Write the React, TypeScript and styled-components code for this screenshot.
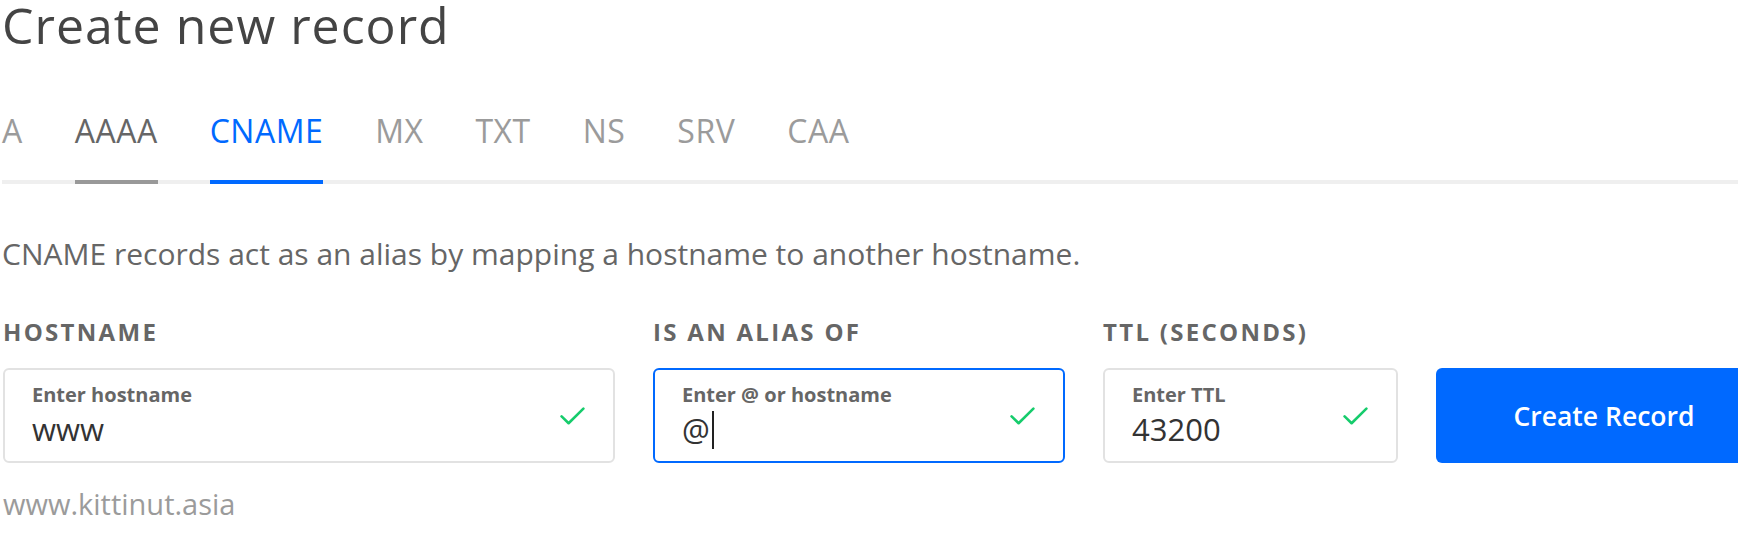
import React from "react";
import styled, { createGlobalStyle } from "styled-components";

const GlobalStyle = createGlobalStyle`
  html, body {
    margin: 0;
    padding: 0;
    background: #ffffff;
    overflow: hidden;
  }
  body {
    font-family: "Open Sans", "Liberation Sans", sans-serif;
    -webkit-font-smoothing: antialiased;
  }
  * { box-sizing: border-box; }
`;

const Page = styled.div`
  padding: 0 0 0 2px;
  width: 1738px;
`;

const Title = styled.h1`
  margin: 0;
  font-size: 50px;
  line-height: 50px;
  font-weight: 400;
  color: #444444;
  letter-spacing: 1px;
`;

const TabBar = styled.nav`
  display: flex;
  gap: 52px;
  margin-top: 61px;
  border-bottom: 4px solid #efefef;
`;

type TabState = "idle" | "hover" | "active";

const tabColor: Record<TabState, string> = {
  idle: "#9b9b9b",
  hover: "#666666",
  active: "#0069ff",
};
const tabLine: Record<TabState, string> = {
  idle: "transparent",
  hover: "#999999",
  active: "#0069ff",
};

const Tab = styled.div<{ $state: TabState }>`
  font-size: 32px;
  line-height: 40px;
  font-weight: 400;
  letter-spacing: 0.5px;
  padding-bottom: 29px;
  margin-bottom: -4px;
  border-bottom: 4px solid ${(p) => tabLine[p.$state]};
  color: ${(p) => tabColor[p.$state]};
`;

const Description = styled.p`
  margin: 50px 0 0 0;
  font-size: 30px;
  line-height: 40px;
  color: #666666;
`;

const FormGrid = styled.div`
  display: grid;
  grid-template-columns: 612px 412px 295px 336px;
  column-gap: 38px;
  row-gap: 21px;
  margin: 43px 0 0 1px;
  align-items: start;
`;

const FieldLabel = styled.div`
  font-size: 24px;
  line-height: 30px;
  font-weight: 700;
  letter-spacing: 2.3px;
  color: #666666;
  text-transform: uppercase;
  white-space: nowrap;
`;

const InputBox = styled.div<{ $focused?: boolean }>`
  height: 95px;
  border: 2px solid ${(p) => (p.$focused ? "#0069ff" : "#e2e2e2")};
  border-radius: 6px;
  display: flex;
  align-items: center;
  justify-content: space-between;
  padding: 0 28px 0 27px;
  background: #ffffff;
`;

const TextStack = styled.div`
  display: flex;
  flex-direction: column;
  gap: 2px;
`;

const InputLabel = styled.div`
  font-size: 20px;
  line-height: 24px;
  font-weight: 700;
  color: #666666;
  white-space: nowrap;
`;

const InputValue = styled.div`
  font-size: 31px;
  line-height: 40px;
  color: #333333;
  white-space: nowrap;
`;

const Caret = styled.span`
  display: inline-block;
  width: 2px;
  height: 38px;
  margin-left: 2px;
  background: #222222;
  vertical-align: -8px;
`;

const Hint = styled.div`
  grid-column: 1;
  margin-top: 3px;
  font-size: 29px;
  line-height: 34px;
  color: #9b9b9b;
`;

const SubmitButton = styled.button`
  height: 95px;
  border: none;
  border-radius: 6px;
  background: #0069ff;
  color: #ffffff;
  font-family: "Open Sans", "Liberation Sans", sans-serif;
  font-size: 26.5px;
  font-weight: 600;
  cursor: pointer;
  padding: 0;
`;

const Check = () => (
  <svg width="25" height="18" viewBox="0 0 25 18" fill="none" aria-hidden>
    <polyline
      points="1.6,9.4 8.6,16.2 23.4,1.6"
      stroke="#16cc6c"
      strokeWidth="2.6"
      strokeLinecap="round"
      strokeLinejoin="round"
    />
  </svg>
);

const tabs: { name: string; state: TabState }[] = [
  { name: "A", state: "idle" },
  { name: "AAAA", state: "hover" },
  { name: "CNAME", state: "active" },
  { name: "MX", state: "idle" },
  { name: "TXT", state: "idle" },
  { name: "NS", state: "idle" },
  { name: "SRV", state: "idle" },
  { name: "CAA", state: "idle" },
];

export default function App() {
  return (
    <>
      <GlobalStyle />
      <Page>
        <Title>Create new record</Title>
        <TabBar>
          {tabs.map((t) => (
            <Tab key={t.name} $state={t.state}>
              {t.name}
            </Tab>
          ))}
        </TabBar>
        <Description>
          CNAME records act as an alias by mapping a hostname to another hostname.
        </Description>
        <FormGrid>
          <FieldLabel>Hostname</FieldLabel>
          <FieldLabel>Is an alias of</FieldLabel>
          <FieldLabel>TTL (seconds)</FieldLabel>
          <div />

          <InputBox>
            <TextStack>
              <InputLabel>Enter hostname</InputLabel>
              <InputValue>www</InputValue>
            </TextStack>
            <Check />
          </InputBox>
          <InputBox $focused>
            <TextStack>
              <InputLabel>Enter @ or hostname</InputLabel>
              <InputValue>
                @<Caret />
              </InputValue>
            </TextStack>
            <Check />
          </InputBox>
          <InputBox>
            <TextStack>
              <InputLabel>Enter TTL</InputLabel>
              <InputValue>43200</InputValue>
            </TextStack>
            <Check />
          </InputBox>
          <SubmitButton>Create Record</SubmitButton>

          <Hint>www.kittinut.asia</Hint>
        </FormGrid>
      </Page>
    </>
  );
}
